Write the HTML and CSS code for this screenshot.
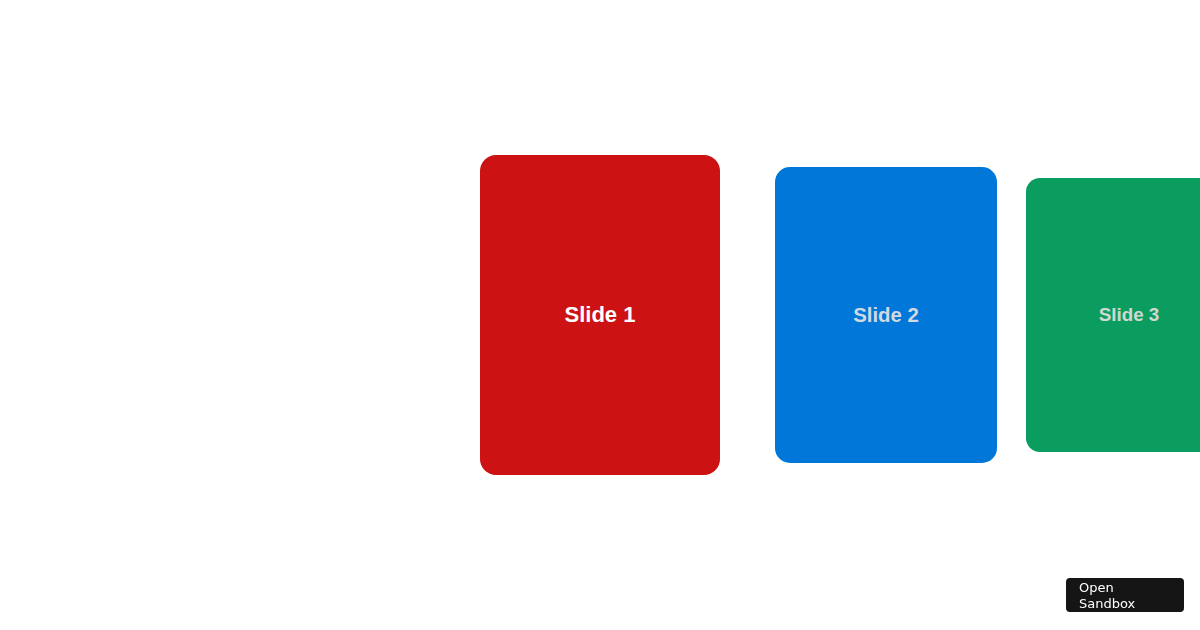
FILE: index.html
```html
<!DOCTYPE html>
<html lang="en">
<head>
<meta charset="utf-8">
<title>Slides</title>
<link rel="stylesheet" href="styles.css">
</head>
<body>
<main class="stage">
  <div class="track">
    <div class="slide slide-red slide-active"><span>Slide 1</span></div>
    <div class="slide slide-blue slide-next"><span>Slide 2</span></div>
    <div class="slide slide-green slide-far"><span>Slide 3</span></div>
  </div>
</main>
<button class="sandbox-btn">Open Sandbox</button>
</body>
</html>
```
FILE: styles.css
```css
html, body {
  margin: 0;
  padding: 0;
  width: 1200px;
  height: 630px;
  overflow: hidden;
  background: #ffffff;
  font-family: "Liberation Sans", Arial, sans-serif;
}
.stage {
  height: 630px;
  display: flex;
  align-items: center;
  overflow: hidden;
}
.track {
  display: flex;
  align-items: center;
  padding-left: 480px;
  flex-shrink: 0;
}
.slide {
  flex-shrink: 0;
  display: flex;
  align-items: center;
  justify-content: center;
  font-weight: 700;
}
.slide-active {
  width: 240px;
  height: 320px;
  border-radius: 16px;
  font-size: 22px;
  color: #ffffff;
}
.slide-next {
  width: 222px;
  height: 296px;
  border-radius: 15px;
  font-size: 20.4px;
  color: #d2d9e0;
  margin-left: 55px;
}
.slide-far {
  width: 206px;
  height: 274px;
  border-radius: 14px;
  font-size: 18.8px;
  color: #d0d8d2;
  margin-left: 29px;
}
.slide-red { background: #cd1213; }
.slide-blue { background: #0077d9; }
.slide-green { background: #0a9d5f; }
.sandbox-btn {
  position: fixed;
  right: 16px;
  bottom: 18px;
  width: 118px;
  height: 34px;
  box-sizing: border-box;
  padding: 1px 40px 0 13px;
  background: #151515;
  color: #ffffff;
  border: none;
  border-radius: 4px;
  font-family: "DejaVu Sans", sans-serif;
  font-size: 13px;
  line-height: 16px;
  text-align: left;
  cursor: pointer;
}
```
